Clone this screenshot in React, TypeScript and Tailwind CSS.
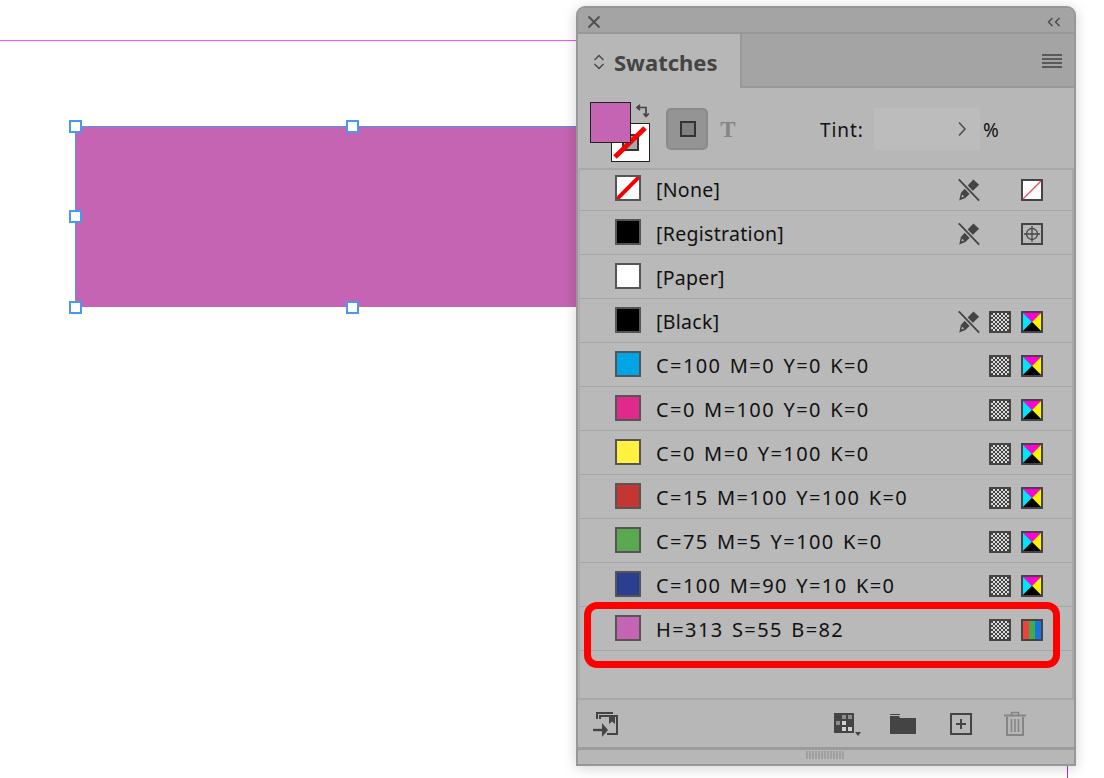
import React from "react";

const NONE = "none";

type Row = {
  name: string;
  color: string;
  pencil?: boolean;
  checker?: boolean;
  mode?: "none" | "reg" | "cmyk" | "rgb";
};

const rows: Row[] = [
  { name: "[None]", color: NONE, pencil: true, mode: "none" },
  { name: "[Registration]", color: "#000000", pencil: true, mode: "reg" },
  { name: "[Paper]", color: "#ffffff" },
  { name: "[Black]", color: "#000000", pencil: true, checker: true, mode: "cmyk" },
  { name: "C=100 M=0 Y=0 K=0", color: "#00a5e6", checker: true, mode: "cmyk" },
  { name: "C=0 M=100 Y=0 K=0", color: "#e0298c", checker: true, mode: "cmyk" },
  { name: "C=0 M=0 Y=100 K=0", color: "#fff140", checker: true, mode: "cmyk" },
  { name: "C=15 M=100 Y=100 K=0", color: "#c53532", checker: true, mode: "cmyk" },
  { name: "C=75 M=5 Y=100 K=0", color: "#5aa84f", checker: true, mode: "cmyk" },
  { name: "C=100 M=90 Y=10 K=0", color: "#2a3f8f", checker: true, mode: "cmyk" },
  { name: "H=313 S=55 B=82", color: "#c464b2", checker: true, mode: "rgb" },
];

function Pencil() {
  return (
    <svg width="23" height="24" viewBox="0 0 26 26" className="block">
      <path d="M18.5 1 L25 7 L9.5 22 L2.5 25 L4.5 16 Z" fill="#444" />
      <path d="M5 21.5 L5.8 18.3 L8.2 20.4 Z" fill="#b9b9b9" />
      <path d="M2 1 L25 25" stroke="#b9b9b9" strokeWidth="5" fill="none" />
      <path d="M2 1 L25 25" stroke="#444" strokeWidth="2" fill="none" />
    </svg>
  );
}

function Checker({ id }: { id: string }) {
  return (
    <svg width="22" height="22" viewBox="0 0 22 22" className="block">
      <defs>
        <pattern id={id} x="2" y="2" width="4" height="4" patternUnits="userSpaceOnUse">
          <rect width="4" height="4" fill="#d8d8d8" />
          <rect width="2" height="2" fill="#444" />
          <rect x="2" y="2" width="2" height="2" fill="#444" />
        </pattern>
      </defs>
      <rect width="22" height="22" fill="#444" />
      <rect x="2" y="2" width="18" height="18" fill={`url(#${id})`} />
    </svg>
  );
}

function ModeIcon({ mode }: { mode: Row["mode"] }) {
  if (mode === "none") {
    return (
      <svg width="22" height="22" viewBox="0 0 22 22" className="block">
        <rect x="1" y="1" width="20" height="20" fill="#fff" stroke="#444" strokeWidth="2" />
        <path d="M2 20 L20 2" stroke="#f0494c" strokeWidth="1.3" />
      </svg>
    );
  }
  if (mode === "reg") {
    return (
      <svg width="22" height="22" viewBox="0 0 22 22" className="block">
        <rect x="1" y="1" width="20" height="20" fill="none" stroke="#444" strokeWidth="2" />
        <circle cx="11" cy="11" r="5.5" fill="none" stroke="#444" strokeWidth="1.3" />
        <path d="M11 3 V19 M3 11 H19" stroke="#444" strokeWidth="1.3" />
      </svg>
    );
  }
  if (mode === "rgb") {
    return (
      <svg width="22" height="22" viewBox="0 0 22 22" className="block">
        <rect width="22" height="22" fill="#444" />
        <rect x="2" y="2" width="6" height="18" fill="#f0413f" />
        <rect x="8" y="2" width="6" height="18" fill="#3fae49" />
        <rect x="14" y="2" width="6" height="18" fill="#1a73e0" />
      </svg>
    );
  }
  return (
    <svg width="22" height="22" viewBox="0 0 22 22" className="block">
      <rect width="22" height="22" fill="#444" />
      <path d="M2 2 H20 L11 11 Z" fill="#ff00d8" />
      <path d="M2 2 V20 L11 11 Z" fill="#00e5ff" />
      <path d="M20 2 V20 L11 11 Z" fill="#fff200" />
      <path d="M2 20 H20 L11 11 Z" fill="#000" />
    </svg>
  );
}

function SwatchChip({ color }: { color: string }) {
  return (
    <div
      className="w-[26px] h-[26px] mb-[4px] border-2 border-[#555555] relative overflow-hidden shrink-0"
      style={{ backgroundColor: color === NONE ? "#ffffff" : color }}
    >
      {color === NONE && (
        <svg width="22" height="22" viewBox="0 0 22 22" className="absolute inset-0">
          <path d="M0 22 L22 0" stroke="#f40000" strokeWidth="4" />
        </svg>
      )}
    </div>
  );
}

function SwatchRow({ row, index }: { row: Row; index: number }) {
  const isLabel = row.name.startsWith("[");
  return (
    <div className="h-[44px] border-b border-[#a6a6a6] flex items-center pl-[35px] pr-[29px] pt-[2px] shrink-0">
      <SwatchChip color={row.color} />
      <span
        className={
          isLabel
            ? "ml-[15px] text-[19.5px] tracking-[0.3px] text-[#111111] whitespace-nowrap"
            : "ml-[15px] text-[20px] tracking-[1.4px] [word-spacing:1.8px] text-[#111111] whitespace-nowrap"
        }
      >
        {row.name}
      </span>
      <div className="ml-auto flex items-center">
        <div className="w-[26px] pl-[1px] flex justify-start">{row.pencil && <Pencil />}</div>
        <div className="w-[22px] ml-[7px]">{row.checker && <Checker id={`chk${index}`} />}</div>
        <div className="w-[22px] ml-[10px]">{row.mode && <ModeIcon mode={row.mode} />}</div>
      </div>
    </div>
  );
}

function Handle({ className }: { className: string }) {
  return <div className={`absolute w-[13px] h-[13px] bg-white border-2 ${className}`} />;
}

export default function App() {
  return (
    <div className="relative w-[1104px] h-[778px] bg-white overflow-hidden font-['Noto_Sans',sans-serif]">
      {/* canvas objects */}
      <div className="absolute left-0 top-[40px] w-[580px] h-px bg-[#ff4dff]" />
      <div className="absolute left-[75px] top-[126px] w-[505px] h-[181px] bg-[#c464b2] border-t border-l border-[#4a98f0]" />
      <Handle className="left-[69px] top-[120px] border-[#4a98f0]" />
      <Handle className="left-[346px] top-[120px] border-[#4a98f0]" />
      <Handle className="left-[69px] top-[210px] border-[#4a98f0]" />
      <Handle className="left-[69px] top-[301px] border-[#4a98f0]" />
      <Handle className="left-[346px] top-[301px] border-[#4a98f0]" />
      <div className="absolute left-[1067px] top-[760px] w-px h-[18px] bg-[#8a3fd0]" />

      {/* floating panel */}
      <div className="absolute left-[576px] top-[6px] w-[500px] h-[760px] flex flex-col bg-[#b7b7b7] border-2 border-[#979797] rounded-t-[9px] shadow-[0_2px_14px_rgba(0,0,0,0.18)] overflow-hidden">
        {/* title bar */}
        <div className="h-[26px] bg-[#a4a4a4] border-b-2 border-[#989898] flex items-center justify-between pl-[9px] pr-[13px] pt-[3px] shrink-0">
          <svg width="14" height="14" viewBox="0 0 14 14">
            <path d="M1.5 1.5 L12.5 12.5 M12.5 1.5 L1.5 12.5" stroke="#505050" strokeWidth="2" />
          </svg>
          <svg width="14" height="10" viewBox="0 0 14 10">
            <path d="M5.5 1 L1.5 5 L5.5 9 M12.5 1 L8.5 5 L12.5 9" stroke="#484848" strokeWidth="1.4" fill="none" />
          </svg>
        </div>

        {/* tab row */}
        <div className="h-[54px] flex shrink-0">
          <div className="w-[164px] bg-[#b7b7b7] border-r-2 border-[#989898] flex items-center pl-[15px] pt-[2px]">
            <svg width="12" height="18" viewBox="0 0 12 18" className="shrink-0">
              <path d="M1.5 7 L6 2.5 L10.5 7 M1.5 11 L6 15.5 L10.5 11" stroke="#484848" strokeWidth="1.4" fill="none" />
            </svg>
            <span className="ml-[9px] text-[22px] font-bold text-[#444444] leading-none">Swatches</span>
          </div>
          <div className="flex-1 bg-[#a4a4a4] border-b-2 border-[#989898] flex items-center justify-end pr-[12px] pt-[2px]">
            <div className="w-[20px] flex flex-col gap-[2px]">
              <div className="h-[2px] bg-[#5a5a5a]" />
              <div className="h-[2px] bg-[#5a5a5a]" />
              <div className="h-[2px] bg-[#5a5a5a]" />
              <div className="h-[2px] bg-[#5a5a5a]" />
            </div>
          </div>
        </div>

        {/* control row */}
        <div className="h-[80px] flex items-start shrink-0 pl-[12px] pt-[14px]">
          <div className="relative w-[60px] h-[60px] shrink-0">
            <div className="absolute left-[21px] top-[21px] w-[39px] h-[39px] bg-white border border-[#222222]">
              <div className="absolute left-[10px] top-[10px] w-[17px] h-[17px] bg-[#a8a8a8] border-[2px] border-[#333333]" />
              <svg width="37" height="37" viewBox="0 0 37 37" className="absolute inset-0">
                <path d="M3 33 L33 4" stroke="#fc0000" strokeWidth="5" />
              </svg>
            </div>
            <div className="absolute left-0 top-0 w-[41px] h-[41px] bg-[#c464b2] border border-[#222222]" />
            <svg width="14" height="14" viewBox="0 0 14 14" className="absolute left-[46px] top-[2px]">
              <path d="M4 1 L1 3.5 L4 6 M1 3.5 H10 V12 M7.5 9.5 L10 12.5 L12.8 9.5" stroke="#444" strokeWidth="1.7" fill="none" />
            </svg>
          </div>
          <div className="ml-[16px] mt-[6px] w-[42px] h-[42px] bg-[#949494] border-2 border-[#8a8a8a] rounded-[5px] flex items-center justify-center shrink-0">
            <div className="ml-[2px] w-[16px] h-[16px] bg-[#808080] border-[2px] border-[#333333]" />
          </div>
          <span className="ml-[11px] mt-[10px] w-[18px] text-center text-[23px] font-bold leading-[36px] text-[#858585] font-['Liberation_Serif',serif]">T</span>
          <span className="ml-[83px] mt-[16px] text-[19px] tracking-[0.9px] leading-[24px] text-[#111111] w-[43px] whitespace-nowrap">Tint:</span>
          <div className="ml-[11px] mt-[6px] w-[106px] h-[42px] bg-[#bcbcbc] rounded-[2px] flex items-center justify-end pr-[13px] shrink-0">
            <svg width="10" height="16" viewBox="0 0 10 16">
              <path d="M2 1.5 L8 8 L2 14.5" stroke="#505050" strokeWidth="1.6" fill="none" />
            </svg>
          </div>
          <span className="ml-[3px] mt-[16px] text-[19px] leading-[24px] text-[#111111]">%</span>
        </div>

        {/* list */}
        <div className="ml-[1px] h-[531px] border-t-2 border-l border-r-2 border-[#a8a8a8] bg-[#b9b9b9] flex flex-col shrink-0 overflow-hidden">
          <div className="-mt-[3px] flex flex-col">
            {rows.map((r, i) => (
              <SwatchRow key={r.name} row={r} index={i} />
            ))}
          </div>
        </div>

        {/* footer */}
        <div className="h-[49px] border-t-2 border-[#a8a8a8] flex items-center pl-[14px] shrink-0 -mt-px">
          <svg width="28" height="26" viewBox="0 0 28 26" className="block">
            <path d="M5 8 V2 H21 M8 8 V5 H25 V23 H15" stroke="#444" strokeWidth="2" fill="none" />
            <path d="M17 5 H23 V13 L20 10.5 L17 13 Z" fill="#444" />
            <path d="M1 19 H10" stroke="#444" strokeWidth="2.4" />
            <path d="M10 12 L16 19 L10 26 Z" fill="#444" />
          </svg>
          <svg width="30" height="26" viewBox="0 0 30 26" className="block ml-[214px]">
            <rect x="0" y="2" width="20" height="20" fill="#444" />
            <rect x="8" y="4" width="4" height="4" fill="#8c8c8c" />
            <rect x="14" y="4" width="4" height="4" fill="#8c8c8c" />
            <rect x="2" y="10" width="4" height="4" fill="#8c8c8c" />
            <rect x="8" y="10" width="4" height="4" fill="#d0d0d0" />
            <rect x="14" y="10" width="4" height="4" fill="#444" />
            <rect x="8" y="16" width="4" height="4" fill="#d0d0d0" />
            <rect x="14" y="16" width="4" height="4" fill="#d0d0d0" />
            <path d="M21 21 H27 L24 25 Z" fill="#444" />
          </svg>
          <svg width="26" height="20" viewBox="0 0 26 20" className="block ml-[26px]">
            <path d="M0 0 H10 V1 H0 Z" fill="#444" />
            <path d="M0 2 H9 L10 4 H26 V20 H0 Z" fill="#444" />
          </svg>
          <svg width="22" height="22" viewBox="0 0 22 22" className="block ml-[34px]">
            <rect x="1" y="1" width="20" height="20" fill="none" stroke="#444" strokeWidth="2" />
            <path d="M6 11 H16 M11 6 V16" stroke="#444" strokeWidth="2" />
          </svg>
          <svg width="22" height="25" viewBox="0 0 22 25" className="block ml-[32px]">
            <path d="M0 4.5 H22" stroke="#858585" strokeWidth="2" />
            <path d="M7.5 4 V1.5 H14.5 V4" stroke="#858585" strokeWidth="1.6" fill="none" />
            <path d="M3 6 V24 H19 V6" stroke="#858585" strokeWidth="2" fill="none" />
            <path d="M7.5 8 V21 M11 8 V21 M14.5 8 V21" stroke="#858585" strokeWidth="1.6" />
          </svg>
        </div>

        {/* grip */}
        <div className="flex-1 border-t-[3px] border-[#9c9c9c] flex justify-center items-start pt-[1px]">
          <div className="flex gap-[1px] h-[8px] ml-[-2px]">
            {Array.from({ length: 13 }).map((_, i) => (
              <div key={i} className="w-[2px] h-full bg-[#a0a0a0]" />
            ))}
          </div>
        </div>
      </div>

      {/* annotation */}
      <div className="absolute left-[584px] top-[602px] w-[476px] h-[66px] border-[7px] border-[#fe0000] rounded-[13px]" />
    </div>
  );
}
